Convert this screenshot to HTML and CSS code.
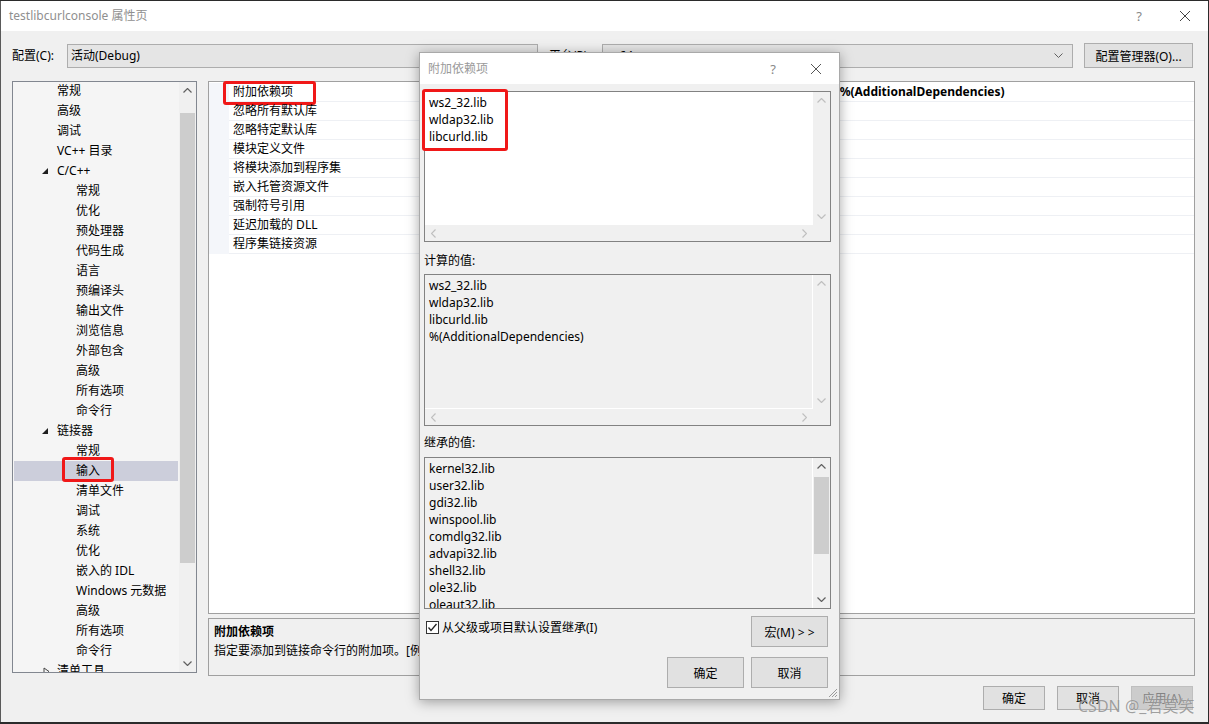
FILE: index.html
```html
<!DOCTYPE html>
<html lang="zh-CN">
<head>
<meta charset="utf-8">
<title>testlibcurlconsole 属性页</title>
<link rel="stylesheet" href="styles.css">
</head>
<body>
<div class="window">
  <div class="titlebar">
    <span class="title">testlibcurlconsole 属性页</span>
    <div class="caption-btns">
      <span class="cap-help">?</span>
      <span class="cap-close"><svg width="12" height="12" viewBox="0 0 12 12"><path d="M1 1L11 11M11 1L1 11" stroke="#444" stroke-width="1" fill="none"/></svg></span>
    </div>
  </div>
  <div class="content">
    <div class="config-row">
      <span class="lbl lbl-config">配置(C):</span>
      <div class="combo combo-config">活动(Debug)</div>
      <span class="lbl lbl-platform">平台(P):</span>
      <div class="combo combo-platform"><span>x64</span><svg class="chev" width="9" height="5" viewBox="0 0 9 5"><polyline points="0.5,0.5 4.5,4.5 8.5,0.5" fill="none" stroke="#606060"/></svg></div>
      <button class="btn btn-cfgmgr">配置管理器(O)...</button>
    </div>
    <div class="main">
      <div class="tree">
        <div class="tree-list">
          <div class="ti l1">常规</div>
          <div class="ti l1">高级</div>
          <div class="ti l1">调试</div>
          <div class="ti l1">VC++ 目录</div>
          <div class="ti l1 open"><svg class="tri" width="7" height="7" viewBox="0 0 7 7"><polygon points="6,0 6,6 0,6" fill="#1e1e1e"/></svg>C/C++</div>
          <div class="ti l2">常规</div>
          <div class="ti l2">优化</div>
          <div class="ti l2">预处理器</div>
          <div class="ti l2">代码生成</div>
          <div class="ti l2">语言</div>
          <div class="ti l2">预编译头</div>
          <div class="ti l2">输出文件</div>
          <div class="ti l2">浏览信息</div>
          <div class="ti l2">外部包含</div>
          <div class="ti l2">高级</div>
          <div class="ti l2">所有选项</div>
          <div class="ti l2">命令行</div>
          <div class="ti l1 open"><svg class="tri" width="7" height="7" viewBox="0 0 7 7"><polygon points="6,0 6,6 0,6" fill="#1e1e1e"/></svg>链接器</div>
          <div class="ti l2">常规</div>
          <div class="ti l2 selected">输入<span class="redbox redbox-tree"></span></div>
          <div class="ti l2">清单文件</div>
          <div class="ti l2">调试</div>
          <div class="ti l2">系统</div>
          <div class="ti l2">优化</div>
          <div class="ti l2">嵌入的 IDL</div>
          <div class="ti l2">Windows 元数据</div>
          <div class="ti l2">高级</div>
          <div class="ti l2">所有选项</div>
          <div class="ti l2">命令行</div>
          <div class="ti l1 closed"><svg class="tri" width="7" height="9" viewBox="0 0 7 9"><polygon points="1,1 6,4.5 1,8" fill="none" stroke="#444"/></svg>清单工具</div>
        </div>
        <div class="vscroll">
          <div class="sb-arrow"><svg width="9" height="5" viewBox="0 0 9 5"><polyline points="0.5,4.5 4.5,0.5 8.5,4.5" fill="none" stroke="#606060" stroke-width="1.2"/></svg></div>
          <div class="sb-track"><div class="sb-thumb tree-thumb"></div></div>
          <div class="sb-arrow"><svg width="9" height="5" viewBox="0 0 9 5"><polyline points="0.5,0.5 4.5,4.5 8.5,0.5" fill="none" stroke="#606060" stroke-width="1.2"/></svg></div>
        </div>
      </div>
      <div class="rightcol">
        <div class="grid">
          <div class="row"><span class="gutter"></span><span class="name">附加依赖项<span class="redbox redbox-grid"></span></span><span class="value">ws2_32.lib;wldap32.lib;libcurld.lib;%(AdditionalDependencies)</span></div>
          <div class="row"><span class="gutter"></span><span class="name">忽略所有默认库</span><span class="value"></span></div>
          <div class="row"><span class="gutter"></span><span class="name">忽略特定默认库</span><span class="value"></span></div>
          <div class="row"><span class="gutter"></span><span class="name">模块定义文件</span><span class="value"></span></div>
          <div class="row"><span class="gutter"></span><span class="name">将模块添加到程序集</span><span class="value"></span></div>
          <div class="row"><span class="gutter"></span><span class="name">嵌入托管资源文件</span><span class="value"></span></div>
          <div class="row"><span class="gutter"></span><span class="name">强制符号引用</span><span class="value"></span></div>
          <div class="row"><span class="gutter"></span><span class="name">延迟加载的 DLL</span><span class="value"></span></div>
          <div class="row"><span class="gutter"></span><span class="name">程序集链接资源</span><span class="value"></span></div>
        </div>
        <div class="desc">
          <div class="desc-title">附加依赖项</div>
          <div class="desc-text">指定要添加到链接命令行的附加项。[例如 kernel32.lib]</div>
        </div>
      </div>
    </div>
    <div class="footer">
      <button class="btn btn-foot">确定</button>
      <button class="btn btn-foot">取消</button>
      <button class="btn btn-foot disabled">应用(A)</button>
    </div>
  </div>

  <div class="dialog">
    <div class="dlg-titlebar">
      <span class="dlg-title">附加依赖项</span>
      <span class="dlg-help">?</span>
      <span class="dlg-close"><svg width="12" height="12" viewBox="0 0 12 12"><path d="M1 1L11 11M11 1L1 11" stroke="#555" stroke-width="1" fill="none"/></svg></span>
    </div>
    <div class="dlg-body">
      <div class="tbox tbox-edit">
        <div class="tb-text">ws2_32.lib<br>wldap32.lib<br>libcurld.lib</div>
        <div class="tb-vs">
          <div class="sb-arrow"><svg width="9" height="5" viewBox="0 0 9 5"><polyline points="0.5,4.5 4.5,0.5 8.5,4.5" fill="none" stroke="#bfbfbf" stroke-width="1.2"/></svg></div>
          <div class="sb-arrow"><svg width="9" height="5" viewBox="0 0 9 5"><polyline points="0.5,0.5 4.5,4.5 8.5,0.5" fill="none" stroke="#bfbfbf" stroke-width="1.2"/></svg></div>
        </div>
        <div class="tb-hs">
          <div class="sb-harrow"><svg width="5" height="9" viewBox="0 0 5 9"><polyline points="4.5,0.5 0.5,4.5 4.5,8.5" fill="none" stroke="#bfbfbf" stroke-width="1.2"/></svg></div>
          <div class="sb-harrow"><svg width="5" height="9" viewBox="0 0 5 9"><polyline points="0.5,0.5 4.5,4.5 0.5,8.5" fill="none" stroke="#bfbfbf" stroke-width="1.2"/></svg></div>
        </div>
        <div class="tb-corner"></div>
        <span class="redbox redbox-dlg"></span>
      </div>
      <div class="dlg-label dlg-label-1">计算的值:</div>
      <div class="tbox tbox-ro">
        <div class="tb-text">ws2_32.lib<br>wldap32.lib<br>libcurld.lib<br>%(AdditionalDependencies)</div>
        <div class="tb-vs">
          <div class="sb-arrow"><svg width="9" height="5" viewBox="0 0 9 5"><polyline points="0.5,4.5 4.5,0.5 8.5,4.5" fill="none" stroke="#bfbfbf" stroke-width="1.2"/></svg></div>
          <div class="sb-arrow"><svg width="9" height="5" viewBox="0 0 9 5"><polyline points="0.5,0.5 4.5,4.5 8.5,0.5" fill="none" stroke="#bfbfbf" stroke-width="1.2"/></svg></div>
        </div>
        <div class="tb-hs">
          <div class="sb-harrow"><svg width="5" height="9" viewBox="0 0 5 9"><polyline points="4.5,0.5 0.5,4.5 4.5,8.5" fill="none" stroke="#bfbfbf" stroke-width="1.2"/></svg></div>
          <div class="sb-harrow"><svg width="5" height="9" viewBox="0 0 5 9"><polyline points="0.5,0.5 4.5,4.5 0.5,8.5" fill="none" stroke="#bfbfbf" stroke-width="1.2"/></svg></div>
        </div>
        <div class="tb-corner"></div>
      </div>
      <div class="dlg-label dlg-label-2">继承的值:</div>
      <div class="tbox tbox-inh">
        <div class="tb-text">kernel32.lib<br>user32.lib<br>gdi32.lib<br>winspool.lib<br>comdlg32.lib<br>advapi32.lib<br>shell32.lib<br>ole32.lib<br>oleaut32.lib<br>uuid.lib</div>
        <div class="tb-vs">
          <div class="sb-arrow"><svg width="9" height="5" viewBox="0 0 9 5"><polyline points="0.5,4.5 4.5,0.5 8.5,4.5" fill="none" stroke="#606060" stroke-width="1.2"/></svg></div>
          <div class="sb-track"><div class="sb-thumb inh-thumb"></div></div>
          <div class="sb-arrow"><svg width="9" height="5" viewBox="0 0 9 5"><polyline points="0.5,0.5 4.5,4.5 8.5,0.5" fill="none" stroke="#606060" stroke-width="1.2"/></svg></div>
        </div>
      </div>
      <div class="dlg-opts">
        <label class="chk">
          <svg class="chk-box" width="13" height="13" viewBox="0 0 13 13"><rect x="0.5" y="0.5" width="12" height="12" fill="#fff" stroke="#333"/><polyline points="2.5,6.5 5,9.5 10.5,3" fill="none" stroke="#222" stroke-width="1.3"/></svg>
          <span>从父级或项目默认设置继承(I)</span>
        </label>
        <button class="btn btn-dlg">宏(M) &gt; &gt;</button>
      </div>
      <div class="dlg-actions">
        <button class="btn btn-dlg">确定</button>
        <button class="btn btn-dlg">取消</button>
      </div>
    </div>
    <svg class="grip" width="10" height="10" viewBox="0 0 10 10"><path d="M9 1L1 9M9 4L4 9M9 7L7 9" stroke="#9a9a9a" stroke-width="1" fill="none"/></svg>
  </div>

  <div class="watermark">CSDN @_君莫笑</div>
</div>
</body>
</html>
```

FILE: styles.css
```css
* { box-sizing: border-box; margin: 0; padding: 0; }

html, body {
  width: 1209px;
  height: 724px;
  overflow: hidden;
  background: #2b2b2b;
}

body {
  font-family: "Noto Sans", "Noto Sans CJK SC", sans-serif;
  font-size: 12px;
  line-height: 16px;
  color: #000;
}

.window {
  position: relative;
  width: 1208px;
  height: 721px;
  margin-top: 1px;
  background: #f0f0f0;
  border-left: 1px solid #5a5a5a;
  display: flex;
  flex-direction: column;
  overflow: hidden;
}

/* title bar */
.titlebar {
  height: 30px;
  background: #fff;
  display: flex;
  align-items: center;
  justify-content: space-between;
  padding-left: 8px;
}
.title { color: #8f8f8f; font-size: 12px; }
.caption-btns { display: flex; align-items: center; height: 30px; }
.cap-help { color: #888; font-size: 13px; width: 46px; text-align: center; margin-right: 0; }
.cap-close { width: 46px; display: flex; justify-content: center; align-items: center; }

/* content */
.content {
  flex: 1;
  padding: 12px 13px 0 11px;
  display: flex;
  flex-direction: column;
}

.config-row { display: flex; align-items: center; height: 25px; }
.lbl { white-space: nowrap; }
.lbl-config { width: 55px; }
.lbl-platform { width: 53px; margin-left: 11px; }
.combo {
  height: 24px;
  width: 471px;
  background: #e5e5e5;
  border: 1px solid #adadad;
  display: flex;
  align-items: center;
  padding-left: 3px;
}
.combo-platform { justify-content: space-between; padding-right: 9px; padding-left: 10px; }

.btn {
  font-family: inherit;
  font-size: 12px;
  background: #e1e1e1;
  border: 1px solid #adadad;
  color: #000;
  display: flex;
  align-items: center;
  justify-content: center;
}
.btn-cfgmgr { width: 109px; height: 25px; margin-left: 11px; }

.main {
  display: flex;
  gap: 11px;
  margin-top: 13px;
}

/* tree */
.tree {
  width: 185px;
  height: 592px;
  border: 1px solid #828790;
  background: #f5f5f5;
  display: flex;
  overflow: hidden;
}
.tree-list { width: 166px; padding: 0 1px; overflow: hidden; margin-top: -1px; }
.ti {
  position: relative;
  height: 20px;
  line-height: 20px;
  white-space: nowrap;
  display: flex;
  align-items: center;
}
.ti.l1 { padding-left: 43px; }
.ti.l2 { padding-left: 62px; }
.ti .tri { position: absolute; left: 28px; top: 7px; }
.ti.closed .tri { top: 6px; left: 29px; }
.ti.selected { background: #cccedb; }

.vscroll {
  width: 17px;
  background: #f0f0f0;
  display: flex;
  flex-direction: column;
}
.sb-arrow { height: 17px; display: flex; align-items: center; justify-content: center; flex: none; }
.sb-track { flex: 1; padding: 0 1px; }
.sb-thumb { background: #cdcdcd; }
.tree-thumb { margin-top: 14px; height: 450px; }

/* right column */
.rightcol { flex: 1; display: flex; flex-direction: column; gap: 4px; }
.grid {
  height: 533px;
  border: 1px solid #a0a0a0;
  background: #fff;
  padding-top: 1px;
}
.row { display: flex; height: 19px; }
.gutter { width: 20px; background: #f4f6fa; flex: none; }
.name {
  position: relative;
  width: 405px;
  flex: none;
  padding-left: 4px;
  line-height: 18px;
  border-bottom: 1px solid #eef0f4;
  white-space: nowrap;
}
.value {
  flex: 1;
  padding-left: 4px;
  line-height: 18px;
  border-bottom: 1px solid #eef0f4;
  font-weight: 700;
  white-space: nowrap;
  overflow: hidden;
}

.desc {
  height: 58px;
  border: 1px solid #a0a0a0;
  background: #f0f0f0;
  padding: 3px 5px;
}
.desc-title { font-weight: 700; line-height: 19px; }
.desc-text { line-height: 19px; white-space: nowrap; }

.footer {
  display: flex;
  justify-content: flex-end;
  gap: 12px;
  margin-top: 10px;
  padding-right: 2px;
}
.btn-foot { width: 62px; height: 24px; }
.btn-foot.disabled { background: #cccccc; border-color: #bfbfbf; color: #838383; }

/* red annotation boxes */
.redbox {
  position: absolute;
  border: 3px solid #f01818;
  border-radius: 3px;
  pointer-events: none;
}
.redbox-tree { left: 48px; top: -4px; width: 52px; height: 25px; }
.redbox-grid { left: -6px; top: -2px; width: 93px; height: 24px; }
.redbox-dlg { left: -3px; top: -3px; width: 86px; height: 62px; }

/* dialog */
.dialog {
  position: absolute;
  left: 418px;
  top: 51px;
  width: 421px;
  height: 648px;
  background: #f0f0f0;
  border: 1px solid #a9a9a9;
  box-shadow: 0 2px 12px rgba(0, 0, 0, 0.35);
  display: flex;
  flex-direction: column;
}
.dlg-titlebar {
  height: 31px;
  background: #fff;
  display: flex;
  align-items: center;
  padding-left: 8px;
  flex: none;
}
.dlg-title { color: #9a9a9a; flex: 1; }
.dlg-help { color: #888; font-size: 13px; width: 46px; text-align: center; margin-right: -3px; }
.dlg-close { width: 46px; display: flex; justify-content: center; }

.dlg-body { padding: 7px 8px 0 4px; display: flex; flex-direction: column; }

.tbox {
  position: relative;
  width: 407px;
  border: 1px solid #828282;
  display: grid;
  grid-template-columns: 1fr 17px;
}
.tbox-edit { height: 151px; grid-template-rows: 1fr 16px; }
.tbox-ro { height: 152px; grid-template-rows: 1fr 16px; }
.tbox-inh { height: 152px; grid-template-rows: 1fr; }

.tb-text {
  padding: 2px 4px;
  line-height: 17px;
  overflow: hidden;
  white-space: nowrap;
}
.tbox-edit .tb-text { background: #fff; }
.tbox-ro .tb-text, .tbox-inh .tb-text {
  background: #f0f0f0;
  border-right: 1px solid #fff;
  border-bottom: 1px solid #fff;
}
.tbox-inh .tb-text { border-bottom: none; }
.tb-vs {
  background: #f0f0f0;
  display: flex;
  flex-direction: column;
  justify-content: space-between;
}
.tb-hs {
  background: #f0f0f0;
  display: flex;
  align-items: center;
  justify-content: space-between;
  padding: 0 6px;
}
.sb-harrow { height: 16px; display: flex; align-items: center; }
.tb-corner { background: #f0f0f0; }
.inh-thumb { margin-top: 2px; height: 77px; margin-left: 0; }

.dlg-label { line-height: 17px; }
.dlg-label-1 { padding-top: 10px; height: 32px; }
.dlg-label-2 { padding-top: 8px; height: 31px; }

.dlg-opts {
  display: flex;
  justify-content: space-between;
  margin-top: 7px;
  padding-right: 3px;
  height: 31px;
}
.chk { display: flex; align-items: center; gap: 3px; padding-left: 2px; margin-top: 3px; height: 17px; line-height: 17px; }
.chk-box { flex: none; }
.btn-dlg { width: 77px; height: 31px; }
.dlg-actions {
  display: flex;
  justify-content: flex-end;
  gap: 7px;
  margin-top: 10px;
  padding-right: 3px;
}
.grip { position: absolute; right: 1px; bottom: 1px; }

.watermark {
  position: absolute;
  left: 1077px;
  top: 695px;
  font-size: 16px;
  line-height: 20px;
  color: rgba(130, 130, 130, 0.75);
  white-space: nowrap;
  text-shadow: 0 0 1px rgba(255,255,255,0.6);
}
```
